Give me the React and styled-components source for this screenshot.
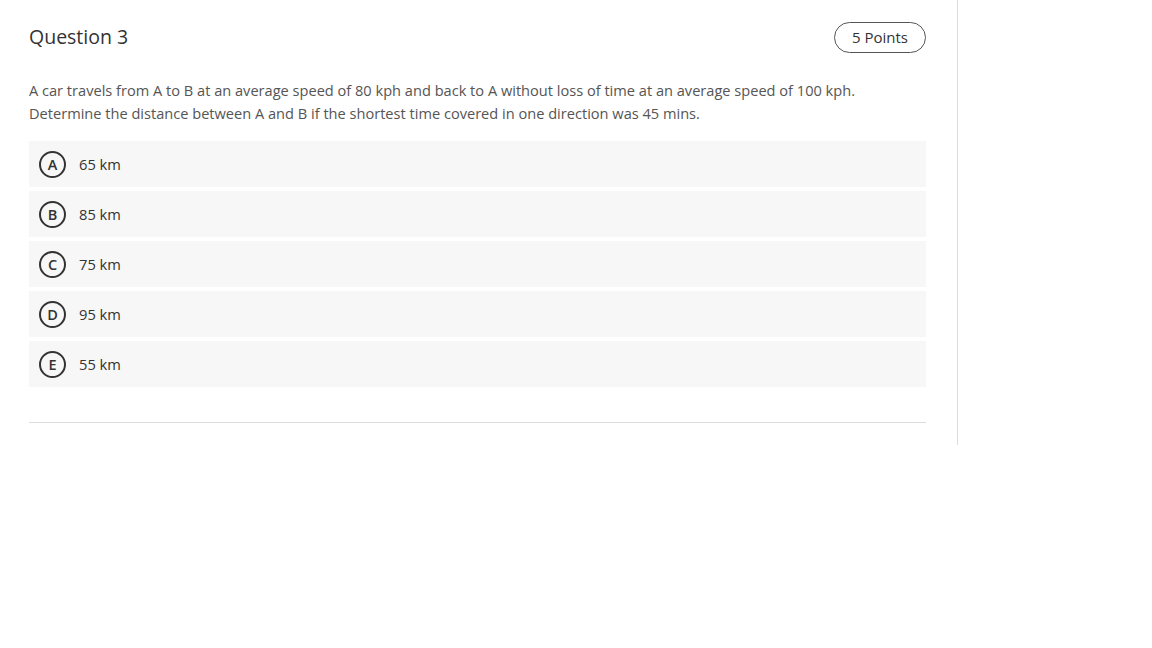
import React from "react";
import styled, { createGlobalStyle } from "styled-components";

const GlobalStyle = createGlobalStyle`
  html, body {
    margin: 0;
    padding: 0;
    background: #fff;
    font-family: "Open Sans", "Liberation Sans", sans-serif;
  }
`;

const Page = styled.div`
  width: 958px;
  box-sizing: border-box;
  padding: 22px 31px 22px 29px;
  border-right: 1px solid #dcdcdc;
`;

const Header = styled.div`
  display: flex;
  align-items: center;
  justify-content: space-between;
  height: 30px;
`;

const Title = styled.h2`
  margin: 0;
  font-size: 19.5px;
  font-weight: 400;
  color: #333;
  line-height: 30px;
`;

const Points = styled.span`
  display: inline-flex;
  align-items: center;
  justify-content: center;
  box-sizing: border-box;
  height: 31px;
  padding: 0 17px;
  border: 1px solid #555;
  border-radius: 16px;
  font-size: 15px;
  color: #333;
`;

const Prompt = styled.p`
  margin: 27px 0 16px;
  font-size: 14.6px;
  line-height: 23px;
  color: #555;
`;

const Options = styled.div`
  display: flex;
  flex-direction: column;
  gap: 4px;
`;

const Option = styled.div`
  display: flex;
  align-items: center;
  gap: 13px;
  height: 46px;
  padding: 0 10px;
  background: #f7f7f7;
  font-size: 14.7px;
  color: #333;
`;

const Letter = styled.span`
  display: inline-flex;
  align-items: center;
  justify-content: center;
  box-sizing: border-box;
  width: 27px;
  height: 27px;
  border: 2px solid #333;
  border-radius: 50%;
  font-size: 14.5px;
  font-weight: 600;
  color: #333;
`;

const Divider = styled.hr`
  margin: 35px 0 0;
  border: 0;
  border-top: 1px solid #dcdcdc;
`;

const choices = [
  ["A", "65 km"],
  ["B", "85 km"],
  ["C", "75 km"],
  ["D", "95 km"],
  ["E", "55 km"],
];

export default function App() {
  return (
    <>
      <GlobalStyle />
      <Page>
        <Header>
          <Title>Question 3</Title>
          <Points>5 Points</Points>
        </Header>
        <Prompt>
          A car travels from A to B at an average speed of 80 kph and back to A
          without loss of time at an average speed of 100 kph.
          <br />
          Determine the distance between A and B if the shortest time covered in
          one direction was 45 mins.
        </Prompt>
        <Options>
          {choices.map(([letter, text]) => (
            <Option key={letter}>
              <Letter>{letter}</Letter>
              {text}
            </Option>
          ))}
        </Options>
        <Divider />
      </Page>
    </>
  );
}
